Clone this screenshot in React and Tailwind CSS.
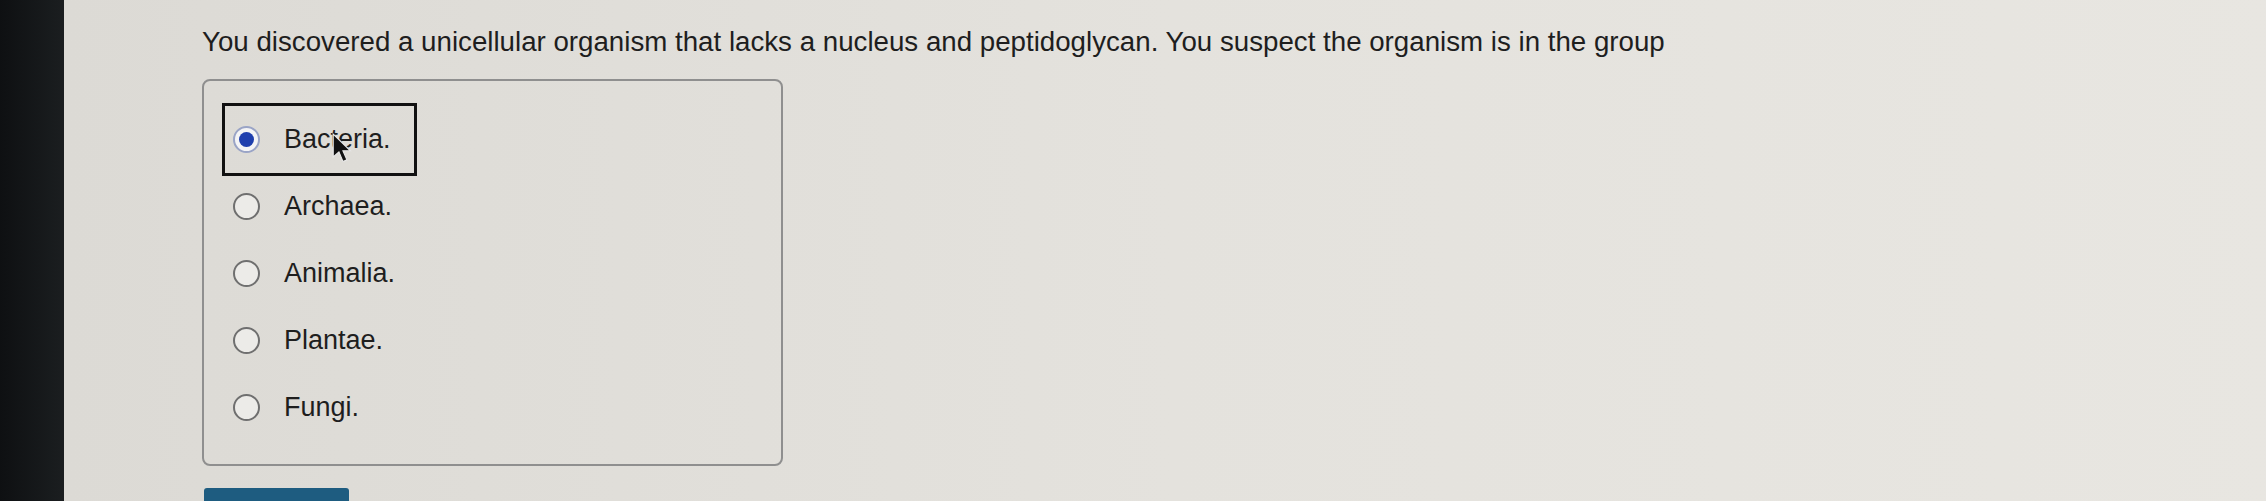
import React from 'react'

const options = ['Bacteria.', 'Archaea.', 'Animalia.', 'Plantae.', 'Fungi.']

function Radio({ checked }) {
  if (checked) {
    return (
      <span className="flex h-[27px] w-[27px] shrink-0 items-center justify-center rounded-full border-[2px] border-[#9aa4c6] bg-[#f4f4f6]">
        <span className="h-[15px] w-[15px] rounded-full bg-[#1f3fae]" />
      </span>
    )
  }
  return <span className="h-[27px] w-[27px] shrink-0 rounded-full border-[2px] border-[#6f6f6f] bg-[#ecebe8]" />
}

function Cursor() {
  return (
    <svg className="absolute left-[107px] top-[27px]" width="23" height="32" viewBox="0 0 20 28">
      <path d="M1 1 L1 21 L6 16.5 L9.5 25 L13 23.5 L9.5 15.5 L16 15.5 Z" fill="#111" stroke="#e8e8e8" strokeWidth="1" />
    </svg>
  )
}

export default function App() {
  const selected = 0

  return (
    <div className="flex h-[501px] w-[2266px] overflow-hidden font-['Liberation_Sans',Arial,sans-serif] text-[#1e1e1e]">
      <div className="w-[64px] shrink-0 bg-gradient-to-r from-[#0e1012] to-[#1b1e20]" />
      <div className="flex-1 bg-gradient-to-r from-[#dcdad5] via-[#e4e2dd] to-[#e8e6e1] pl-[138px] pt-[28px]">
        <p className="text-[27.7px] leading-[27.5px]">
          You discovered a unicellular organism that lacks a nucleus and peptidoglycan. You suspect the organism is in the group
        </p>

        <div className="mt-[23px] w-[581px] rounded-[8px] border-[2px] border-[#8f8f8f] pb-[23px] pl-[21px] pt-[25px]">
          {options.map((opt, i) => (
            <div key={opt} className="flex h-[67px] items-center">
              <label
                className={
                  i === selected
                    ? 'relative flex h-[67px] w-[189px] items-center gap-[24px] pl-[8px] outline outline-[3px] outline-[#111]'
                    : 'relative flex h-[67px] items-center gap-[24px] pl-[8px]'
                }
              >
                <Radio checked={i === selected} />
                <span className="text-[27px] leading-none">{opt}</span>
                {i === selected && <Cursor />}
              </label>
            </div>
          ))}
        </div>

        <div className="ml-[2px] mt-[22px] h-[40px] w-[145px] rounded-t-[3px] bg-[#1e5c80]" />
      </div>
    </div>
  )
}
